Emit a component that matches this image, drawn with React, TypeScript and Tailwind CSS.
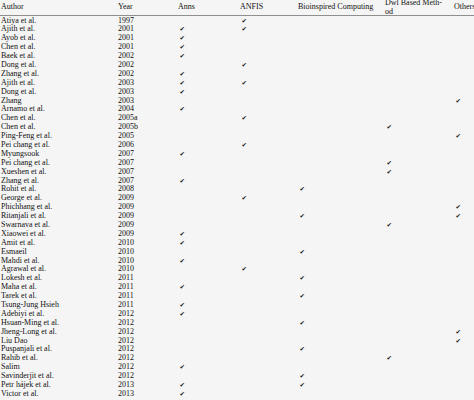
const A = "anns";
const F = "anfis";
const B = "bio";
const D = "dwl";
const O = "others";

const rows: [string, string, string[]][] = [
	["Atiya et al.", "1997", [F]],
	["Ajith et al.", "2001", [A, F]],
	["Ayob et al.", "2001", [A]],
	["Chen et al.", "2001", [A]],
	["Baek et al.", "2002", [A]],
	["Dong et al.", "2002", [F]],
	["Zhang et al.", "2002", [A]],
	["Ajith et al.", "2003", [A, F]],
	["Dong et al.", "2003", [A]],
	["Zhang", "2003", [O]],
	["Arnamo et al.", "2004", [A]],
	["Chen et al.", "2005a", [F]],
	["Chen et al.", "2005b", [D]],
	["Ping-Feng et al.", "2005", [O]],
	["Pei chang et al.", "2006", [F]],
	["Myungsook", "2007", [A]],
	["Pei chang et al.", "2007", [D]],
	["Xueshen et al.", "2007", [D]],
	["Zhang et al.", "2007", [A]],
	["Rohit et al.", "2008", [B]],
	["George et al.", "2009", [F]],
	["Phichhang et al.", "2009", [O]],
	["Ritanjali et al.", "2009", [B, O]],
	["Swarnava et al.", "2009", [D]],
	["Xiaowei et al.", "2009", [A]],
	["Amit et al.", "2010", [A]],
	["Esmaeil", "2010", [B]],
	["Mahdi et al.", "2010", [A]],
	["Agrawal et al.", "2010", [F]],
	["Lokesh et al.", "2011", [B]],
	["Maha et al.", "2011", [A]],
	["Tarek et al.", "2011", [B]],
	["Tsung-Jung Hsieh", "2011", [A]],
	["Adebiyi et al.", "2012", [A]],
	["Hsuan-Ming et al.", "2012", [B]],
	["Jheng-Long et al.", "2012", [O]],
	["Liu Dao", "2012", [O]],
	["Puspanjali et al.", "2012", [B]],
	["Rahib et al.", "2012", [D]],
	["Salim", "2012", [A]],
	["Savinderjit et al.", "2012", [B]],
	["Petr hájek et al.", "2013", [A, B]],
	["Victor et al.", "2013", [A]],
];

const methods = [A, F, B, D, O];

const grid =
	"grid grid-cols-[117px_60px_62px_58px_87px_69px_1fr] pl-[1px]";

function Check({ on }: { on: boolean }) {
	return (
		<div className="pl-[1.5px]">
			{on && (
				<span className="font-['DejaVu_Sans',sans-serif] text-[6.5px] leading-[8px] text-[#1a1a1a]">
					✔
				</span>
			)}
		</div>
	);
}

export default function App() {
	return (
		<div className="h-[400px] w-[474px] overflow-hidden bg-[#f5f5f5] font-['Liberation_Serif',serif] text-[8px] text-[#111]">
			<div className="-mt-[2.5px]">
				<div
					className={`${grid} h-[18.5px] items-center border-b-[1.5px] border-[#8f8f8f] leading-[9px] whitespace-nowrap`}
				>
					<div>Author</div>
					<div>Year</div>
					<div>Anns</div>
					<div>ANFIS</div>
					<div>Bioinspired Computing</div>
					<div>
						Dwl Based Meth-
						<br />
						od
					</div>
					<div>Others</div>
				</div>
				<div className="pt-[0.5px]">
					{rows.map(([author, year, marks], i) => (
						<div
							key={i}
							className={`${grid} h-[8.9px] items-center leading-[8.9px] whitespace-nowrap`}
						>
							<div>{author}</div>
							<div>{year}</div>
							{methods.map((m) => (
								<Check key={m} on={marks.includes(m)} />
							))}
						</div>
					))}
				</div>
			</div>
		</div>
	);
}
